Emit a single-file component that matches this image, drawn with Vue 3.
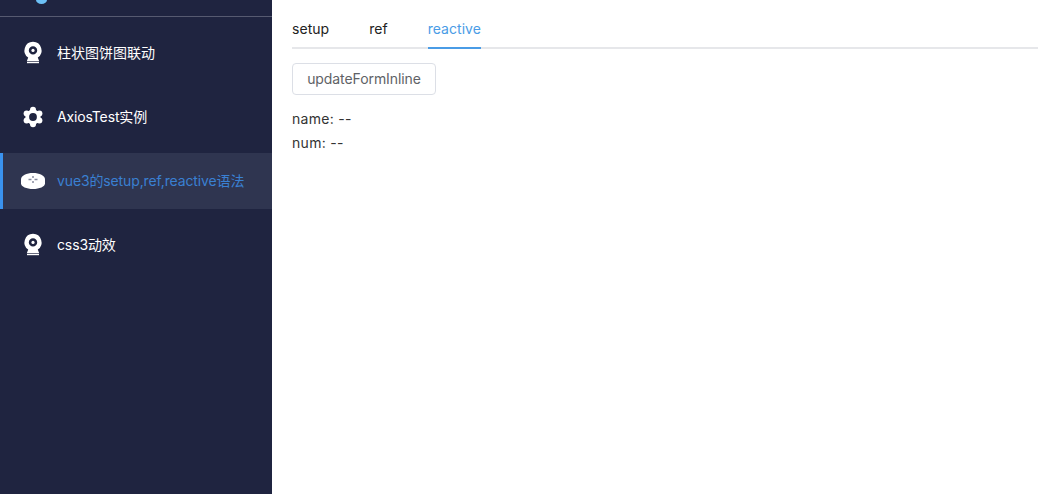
<script setup>
const menus = [
  { title: '柱状图饼图联动', icon: 'camera' },
  { title: 'AxiosTest实例', icon: 'gear', tight: true },
  { title: 'vue3的setup,ref,reactive语法', icon: 'router', active: true, tight: true },
  { title: 'css3动效', icon: 'camera', tight: true }
]
const tabs = ['setup', 'ref', 'reactive']
const activeTab = 'reactive'
// lobes of the gear icon, clockwise from the top
const lobes = [[12, 4.8], [18.400, 8.400], [18.400, 15.600], [12, 19.200], [5.600, 15.600], [5.600, 8.400]]
</script>

<template>
  <div class="layout">
    <aside class="side">
      <div class="logo">
        <span class="logo-mark"></span>
      </div>
      <ul class="menu">
        <li v-for="m in menus" :key="m.title" class="item" :class="{ active: m.active }">
          <svg v-if="m.icon === 'camera'" class="icon" viewBox="0 0 24 24">
            <path fill="#fff" fill-rule="evenodd" d="M12 .8a8.600 8.600 0 0 1 4.800 15.700l1.400 3.700H5.800l1.400-3.700A8.600 8.600 0 0 1 12 .8zm0 4.400a4.200 4.200 0 1 0 0 8.400 4.200 4.200 0 0 0 0-8.400z" />
            <rect x="6" y="20.900" width="12" height="1.300" fill="#fff" />
            <circle cx="12" cy="9.400" r="1.600" fill="#fff" />
          </svg>
          <svg v-else-if="m.icon === 'gear'" class="icon" viewBox="0 0 24 24">
            <circle v-for="(p, i) in lobes" :key="i" :cx="p[0]" :cy="p[1]" r="3" fill="#fff" />
            <circle cx="12" cy="12" r="7.600" fill="#fff" />
            <circle cx="12" cy="12" r="3.900" fill="#1f2440" />
          </svg>
          <svg v-else class="icon" viewBox="0 0 24 24">
            <path fill="#fff" d="M12 4c6.400 0 12 2.600 12 6.500v4c0 3-5.500 5.500-12 5.500S0 17.500 0 14.500v-4C0 6.600 5.600 4 12 4z" />
            <path stroke="#868b9e" stroke-width="1.500" fill="none" d="M7.500 10.500h3M13.500 10.500h3M12 7v2M12 12v2" />
          </svg>
          <span class="label" :class="{ tight: m.tight }">{{ m.title }}</span>
        </li>
      </ul>
    </aside>
    <main class="main">
      <div class="tabs">
        <div v-for="t in tabs" :key="t" class="tab" :class="{ on: t === activeTab }">{{ t }}</div>
      </div>
      <button class="btn"><span class="btn-text">updateFormInline</span></button>
      <p class="line">name: --</p>
      <p class="line">num: --</p>
    </main>
  </div>
</template>

<style>
html, body { margin: 0; background: #fff; }
</style>

<style scoped>
.layout { display: flex; height: 494px; overflow: hidden; font-family: Inter, "Noto Sans CJK SC", sans-serif; font-size: 14px; }
.side { width: 272px; flex: none; background: #1f2440; display: flex; flex-direction: column; }
.logo { height: 16px; border-bottom: 1px solid #565a70; padding-left: 36px; overflow: hidden; }
.logo-mark { display: block; width: 11px; height: 4px; background: #6cc0f5; border-radius: 0 0 50% 50% / 0 0 100% 100%; }
.menu { list-style: none; margin: 0; padding: 8px 0 0; }
.item { height: 56px; margin-bottom: 8px; padding-left: 18px; display: flex; align-items: center; color: #fff; box-sizing: border-box; border-left: 3px solid transparent; }
.item.active { background: #2f3550; border-left-color: #3a92ee; color: #3a80d2; }
.icon { width: 24px; height: 24px; flex: none; }
.label { margin-left: 12px; white-space: nowrap; padding-bottom: 2px; }
.label.tight { letter-spacing: -0.13px; }
.main { flex: 1; padding: 0 0 0 20px; color: #333; }
.tabs { display: flex; gap: 40px; height: 47px; border-bottom: 2px solid #e6e7ea; margin-bottom: 14px; }
.tab { height: 47px; line-height: 58px; color: #222; letter-spacing: 0.04px; }
.tab.on { color: #4a9ce6; border-bottom: 2px solid #4a9ce6; }
.btn { display: block; height: 32px; width: 144px; padding: 0; border: 1px solid #dcdfe6; border-radius: 4px; background: #fff; color: #606266; font: inherit; letter-spacing: -0.08px; margin-bottom: 12px; }
.btn-text { display: block; padding-bottom: 2px; }
.line { margin: 0; line-height: 24px; color: #333; letter-spacing: 0.3px; }
</style>
